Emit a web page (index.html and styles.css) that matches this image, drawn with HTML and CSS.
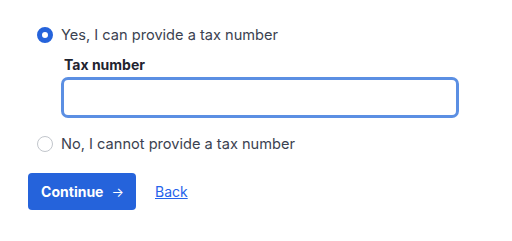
FILE: index.html
```html
<!DOCTYPE html>
<html lang="en">
<head>
<meta charset="utf-8">
<title>Tax number</title>
<link rel="stylesheet" href="styles.css">
</head>
<body>
<form class="form">
  <label class="option">
    <span class="radio radio-checked"></span>
    <span class="option-text">Yes, I can provide a tax number</span>
  </label>
  <div class="field">
    <label class="field-label" for="tax">Tax number</label>
    <input class="input" id="tax" type="text">
  </div>
  <label class="option option-second">
    <span class="radio"></span>
    <span class="option-text">No, I cannot provide a tax number</span>
  </label>
  <div class="actions">
    <button class="btn" type="button">Continue <span class="arrow">→</span></button>
    <a class="link" href="#">Back</a>
  </div>
</form>
</body>
</html>
```
FILE: styles.css
```css
* { box-sizing: border-box; }
html, body { margin: 0; background: #ffffff; }
body {
  font-family: Inter, "Noto Sans", sans-serif;
  color: #374151;
}
.form {
  display: flex;
  flex-direction: column;
  align-items: flex-start;
  padding: 23px 28px 0 28px;
}
.option {
  display: flex;
  align-items: center;
  gap: 8px;
  height: 24px;
  padding-left: 9px;
  font-size: 14.6px;
  color: #3b4250;
}
.radio {
  width: 16px;
  height: 16px;
  border-radius: 50%;
  border: 1.5px solid #c2c6cc;
  background: #fff;
  flex: none;
}
.radio-checked {
  border: 5px solid #2563db;
}
.field {
  display: flex;
  flex-direction: column;
  margin-top: 8px;
  padding-left: 33px;
}
.field-label {
  font-size: 14px;
  font-weight: 700;
  line-height: 20px;
  color: #1f2430;
  padding-left: 3px;
}
.input {
  margin-top: 2px;
  width: 398px;
  height: 41px;
  border: 3px solid #5b8fe3;
  border-radius: 7px;
  outline: none;
  font: inherit;
}
.option-second { margin-top: 14px; }
.actions {
  display: flex;
  align-items: center;
  gap: 19px;
  margin-top: 17px;
}
.btn {
  width: 108px;
  height: 37px;
  border: none;
  border-radius: 4px;
  background: #2563db;
  color: #fff;
  font-family: Inter, sans-serif;
  font-size: 14px;
  font-weight: 700;
  display: flex;
  align-items: center;
  justify-content: center;
  gap: 8px;
  padding: 0 0 0 1px;
}
.arrow { font-weight: 400; font-size: 13px; }
.link {
  color: #2563eb;
  font-size: 14px;
  text-decoration: underline;
}
```
